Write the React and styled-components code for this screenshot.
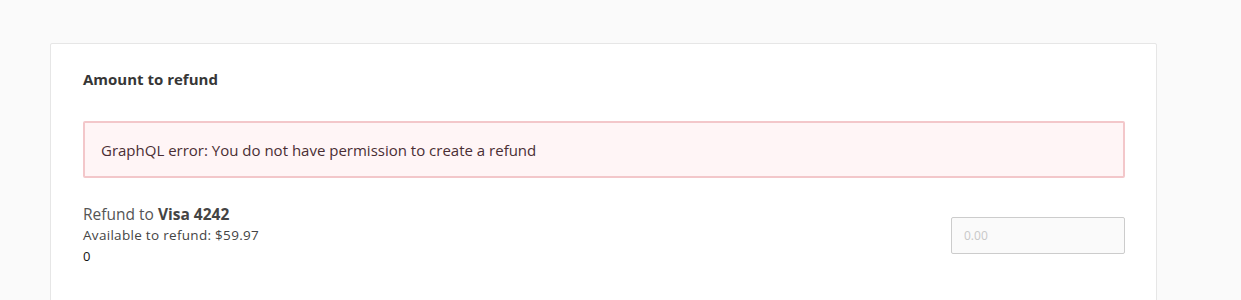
import styled, { createGlobalStyle } from "styled-components";

const GlobalStyle = createGlobalStyle`
  html, body {
    margin: 0;
    padding: 0;
    background-color: #fafafa;
    font-family: "Open Sans", Lato, sans-serif;
  }
`;

function App() {
  return (
    <>
      <GlobalStyle />
      <Page>
        <Card>
          <Heading>Amount to refund</Heading>
          <ErrorBox>GraphQL error: You do not have permission to create a refund</ErrorBox>
          <RefundRow>
            <RefundInfo>
              <RefundTitle>
                Refund to <strong>Visa 4242</strong>
              </RefundTitle>
              <SmallText>Available to refund: $59.97</SmallText>
              <ZeroText>0</ZeroText>
            </RefundInfo>
            <AmountInput placeholder="0.00" />
          </RefundRow>
        </Card>
      </Page>
    </>
  );
}
export default App;

const Page = styled.div`
  padding: 43px 0 0 50px;
  height: 300px;
  box-sizing: border-box;
  overflow: hidden;
`;

const Card = styled.div`
  width: 1107px;
  min-height: 300px;
  box-sizing: border-box;
  background-color: white;
  border: 1px solid #e6e6e6;
  border-radius: 2px;
  padding: 26px 31px 32px 32px;
`;

const Heading = styled.h3`
  margin: 0;
  font-size: 15px;
  font-weight: 700;
  color: #363636;
  line-height: 18px;
`;

const ErrorBox = styled.div`
  margin-top: 33px;
  height: 57px;
  box-sizing: border-box;
  display: flex;
  align-items: center;
  padding: 0 16px;
  background-color: #fff5f6;
  border: 2px solid #f3c7ca;
  border-radius: 2px;
  font-size: 15px;
  color: #4a2e34;
`;

const RefundRow = styled.div`
  margin-top: 25px;
  display: flex;
  justify-content: space-between;
  align-items: center;
`;

const RefundInfo = styled.div`
  display: flex;
  flex-direction: column;
`;

const RefundTitle = styled.div`
  font-size: 15.5px;
  line-height: 22px;
  color: #555555;

  strong {
    font-weight: 700;
    color: #444444;
  }
`;

const SmallText = styled.div`
  font-size: 13.5px;
  letter-spacing: 0.3px;
  line-height: 21px;
  color: #444444;
`;

const ZeroText = styled.div`
  font-size: 13px;
  line-height: 20px;
  color: #111111;
`;

const AmountInput = styled.input`
  margin-top: 2px;
  width: 174px;
  height: 37px;
  box-sizing: border-box;
  padding: 0 12px;
  border: 1px solid #cccccc;
  border-radius: 2px;
  background-color: #fafafa;
  font-family: "Open Sans", Lato, sans-serif;
  font-size: 12px;
  outline: none;

  &::placeholder {
    color: #c8c8c8;
  }
`;
